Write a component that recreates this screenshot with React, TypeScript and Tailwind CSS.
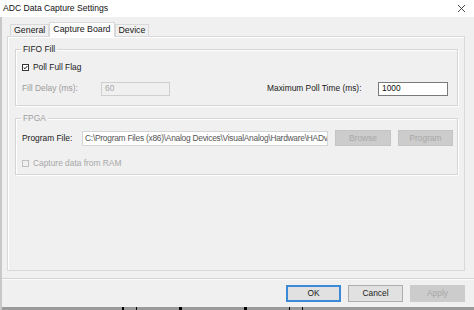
import React from 'react';

const font = { fontFamily: '"Liberation Sans", Arial, sans-serif' };

const GroupBox: React.FC<{ title: string; disabled?: boolean; className?: string; children: React.ReactNode }> = ({ title, disabled, className, children }) => (
  <div className={`relative border border-[#d5d5d5] shadow-[inset_1px_1px_0_#ffffff,1px_1px_0_#ffffff] ${className ?? ''}`}>
    <span className={`absolute -top-[6px] left-[5px] bg-[#f0f0f0] px-[2px] leading-[11px] ${disabled ? 'text-[#a0a0a0]' : 'text-[#1a1a1a]'}`}>
      {title}
    </span>
    {children}
  </div>
);

const CheckBox: React.FC<{ checked?: boolean; disabled?: boolean; label: string }> = ({ checked, disabled, label }) => (
  <div className="flex items-center gap-[4px]">
    <div className={`w-[7px] h-[7px] border flex items-center justify-center ${disabled ? 'border-[#c0c0c0] bg-[#f0f0f0]' : 'border-[#333] bg-white'}`}>
      {checked && (
        <svg width="7" height="7" viewBox="0 0 7 7">
          <path d="M1 3.5 L2.8 5.3 L6 1.5" stroke="#111" strokeWidth="1.4" fill="none" />
        </svg>
      )}
    </div>
    <span className={disabled ? 'text-[#a8a8a8]' : 'text-[#1a1a1a]'}>{label}</span>
  </div>
);

const Tab: React.FC<{ label: string; active?: boolean }> = ({ label, active }) => (
  <div
    className={`border border-[#d9d9d9] px-[3px] flex items-center text-[#1a1a1a] text-[8.8px] ${
      active ? 'h-[15px] bg-[#fcfcfc] border-b-0 -mb-px relative z-10' : 'h-[12px] bg-[#f0f0f0] border-b-0'
    }`}
  >
    {label}
  </div>
);

const DlgButton: React.FC<{ label: string; variant?: 'default' | 'normal' | 'disabled' }> = ({ label, variant = 'normal' }) => {
  const cls =
    variant === 'default'
      ? 'border-[#3c8ad6] bg-[#e1e1e1] text-[#1a1a1a] shadow-[inset_0_0_0_1px_#3c8ad6]'
      : variant === 'disabled'
      ? 'border-[#cccccc] bg-[#cccccc] text-[#a8a8a8]'
      : 'border-[#adadad] bg-[#e1e1e1] text-[#1a1a1a]';
  return <div className={`w-[55px] h-[17px] border flex items-center justify-center ${cls}`}>{label}</div>;
};

export default function App() {
  return (
    <div className="w-[474px] h-[310px] bg-[#f0f0f0] flex flex-col text-[8.4px] overflow-hidden" style={font}>
      {/* title bar */}
      <div className="h-[17px] bg-white flex items-center justify-between pl-[3px] pr-[8px] shrink-0">
        <span className="text-[8.6px] text-[#111]">ADC Data Capture Settings</span>
        <svg width="9" height="9" viewBox="0 0 9 9">
          <path d="M1 1 L8 8 M8 1 L1 8" stroke="#333" strokeWidth="0.9" />
        </svg>
      </div>

      <div className="flex-1 flex flex-col border-l-[2px] border-[#c8c8c8]">
        {/* tabs */}
        <div className="flex items-end pl-[8px] mt-[5px] h-[14px]">
          <Tab label="General" />
          <Tab label="Capture Board" active />
          <Tab label="Device" />
        </div>

        {/* tab page */}
        <div className="ml-[5px] mr-[9px] h-[235px] border border-[#d9d9d9] shadow-[inset_1px_1px_0_#ffffff] px-[7px] pt-[12px] flex flex-col gap-[12px]">
          <GroupBox title="FIFO Fill" className="h-[57px] mr-[-1px]">
            <div className="pl-[6px] pt-[11px] flex flex-col gap-[8px]">
              <CheckBox checked label="Poll Full Flag" />
              <div className="flex items-center">
                <span className="w-[79px] text-[#9a9a9a]">Fill Delay (ms):</span>
                <div className="w-[69px] h-[14px] border border-[#cfcfcf] bg-[#f0f0f0] text-[#a8a8a8] pl-[3px] flex items-center">60</div>
                <span className="ml-[97px] w-[111px] text-[#1a1a1a]">Maximum Poll Time (ms):</span>
                <div className="w-[70px] h-[14px] border border-[#7a7a7a] bg-white text-[#111] pl-[3px] flex items-center">1000</div>
              </div>
            </div>
          </GroupBox>

          <GroupBox title="FPGA" disabled className="h-[57px] mr-[-1px]">
            <div className="pl-[6px] pt-[11px] flex flex-col gap-[11px]">
              <div className="flex items-center">
                <span className="w-[60px] text-[#1a1a1a]">Program File:</span>
                <div className="w-[246px] h-[15px] border border-[#d5d5d5] bg-white text-[#555] pl-[2px] flex items-center whitespace-nowrap overflow-hidden tracking-[-0.25px]">
                  C:\Program Files (x86)\Analog Devices\VisualAnalog\Hardware\HADv6
                </div>
                <div className="ml-[7px] w-[56px] h-[16px] bg-[#cccccc] border border-[#c4c4c4] text-[#a8a8a8] flex items-center justify-center">Browse</div>
                <div className="ml-[7px] w-[55px] h-[16px] bg-[#cccccc] border border-[#c4c4c4] text-[#a8a8a8] flex items-center justify-center">Program</div>
              </div>
              <CheckBox disabled label="Capture data from RAM" />
            </div>
          </GroupBox>
        </div>

        {/* separator */}
        <div className="mt-[7px] h-[2px] border-t border-[#d4d4d4] bg-white/70" />

        {/* buttons */}
        <div className="flex justify-end gap-[7px] pr-[9px] mt-[5px]">
          <DlgButton label="OK" variant="default" />
          <DlgButton label="Cancel" />
          <DlgButton label="Apply" variant="disabled" />
        </div>

        <div className="mt-auto h-[3px] bg-[#9a9a9a] flex items-end gap-[12px] pl-[120px]">
          <span className="w-[2px] h-[3px] bg-black" />
          <span className="w-[1px] h-[3px] bg-black" />
          <span className="w-[3px] h-[3px] bg-black ml-[30px]" />
          <span className="w-[3px] h-[3px] bg-black ml-[50px]" />
          <span className="w-[1px] h-[3px] bg-black ml-[30px]" />
          <span className="w-[1px] h-[3px] bg-black" />
        </div>
      </div>
    </div>
  );
}
